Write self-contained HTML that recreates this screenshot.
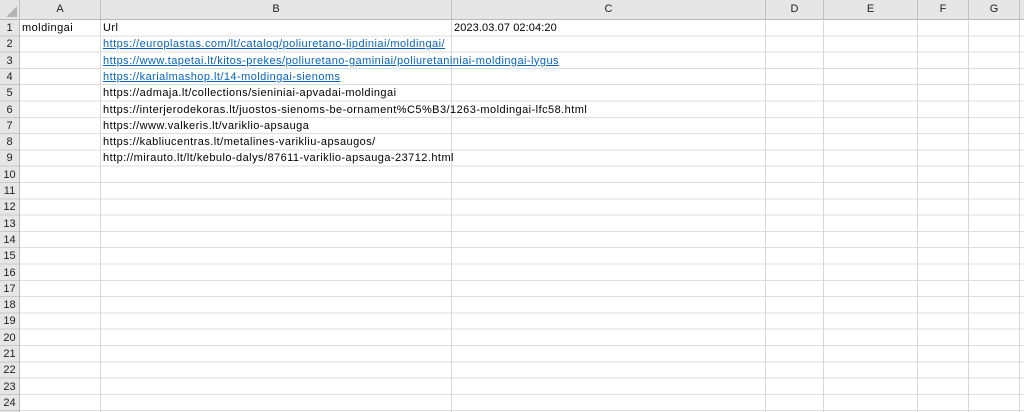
<!DOCTYPE html>
<html><head><meta charset="utf-8"><style>
html,body{margin:0;padding:0;width:1024px;height:412px;overflow:hidden;background:#fff;font-family:"Liberation Sans",Calibri,sans-serif;}
#g{position:absolute;left:20px;top:20px;width:1004px;height:392px;
background-image:repeating-linear-gradient(to bottom,transparent 0,transparent 15.3px,#dedede 15.3px,#dedede 16.3px);}
.v{position:absolute;top:0;width:1px;height:412px;background:#d8d8d8}
.vh{position:absolute;top:0;width:1px;height:20px;background:#c0c0c0}
#hdr{position:absolute;left:0;top:0;width:1024px;height:19px;background:#e6e6e6;border-bottom:1px solid #b8b8b8}
#rh{position:absolute;left:0;top:20px;width:19px;height:392px;background:#e6e6e6;border-right:1px solid #b8b8b8;
background-image:repeating-linear-gradient(to bottom,transparent 0,transparent 15.3px,#c8c8c8 15.3px,#c8c8c8 16.3px);}
.ch{position:absolute;top:3px;font-size:11px;color:#222;text-align:center}
.rn{position:absolute;left:0;width:19px;text-align:center;font-size:11px;color:#222}
.t{position:absolute;font-size:11px;letter-spacing:0.45px;color:#000;white-space:nowrap}
.l{color:#0563c1;text-decoration:underline}
#tri{position:absolute;left:6px;top:6px;width:0;height:0;border-left:11px solid transparent;border-bottom:11px solid #b4b4b4}
</style></head><body>
<div id="g"></div>
<div class="v" style="left:100px"></div>
<div class="v" style="left:451px"></div>
<div class="v" style="left:765px"></div>
<div class="v" style="left:823px"></div>
<div class="v" style="left:917px"></div>
<div class="v" style="left:968px"></div>
<div class="v" style="left:1019px"></div>
<div id="hdr"></div>
<div id="tri"></div>
<div class="vh" style="left:19px"></div>
<div class="vh" style="left:100px"></div>
<div class="vh" style="left:451px"></div>
<div class="vh" style="left:765px"></div>
<div class="vh" style="left:823px"></div>
<div class="vh" style="left:917px"></div>
<div class="vh" style="left:968px"></div>
<div class="vh" style="left:1019px"></div>
<div class="ch" style="left:20px;width:80px">A</div>
<div class="ch" style="left:101px;width:350px">B</div>
<div class="ch" style="left:452px;width:313px">C</div>
<div class="ch" style="left:766px;width:57px">D</div>
<div class="ch" style="left:824px;width:93px">E</div>
<div class="ch" style="left:918px;width:50px">F</div>
<div class="ch" style="left:969px;width:50px">G</div>
<div id="rh"></div>
<div class="rn" style="top:22px">1</div>
<div class="rn" style="top:38.3px">2</div>
<div class="rn" style="top:54.6px">3</div>
<div class="rn" style="top:70.9px">4</div>
<div class="rn" style="top:87.2px">5</div>
<div class="rn" style="top:103.5px">6</div>
<div class="rn" style="top:119.8px">7</div>
<div class="rn" style="top:136.1px">8</div>
<div class="rn" style="top:152.4px">9</div>
<div class="rn" style="top:168.7px">10</div>
<div class="rn" style="top:185px">11</div>
<div class="rn" style="top:201.3px">12</div>
<div class="rn" style="top:217.6px">13</div>
<div class="rn" style="top:233.9px">14</div>
<div class="rn" style="top:250.2px">15</div>
<div class="rn" style="top:266.5px">16</div>
<div class="rn" style="top:282.8px">17</div>
<div class="rn" style="top:299.1px">18</div>
<div class="rn" style="top:315.4px">19</div>
<div class="rn" style="top:331.7px">20</div>
<div class="rn" style="top:348px">21</div>
<div class="rn" style="top:364.3px">22</div>
<div class="rn" style="top:380.6px">23</div>
<div class="rn" style="top:396.9px">24</div>
<div class="t" style="left:22px;top:22px">moldingai</div>
<div class="t" style="left:103px;top:22px">Url</div>
<div class="t" style="left:454px;top:22px;letter-spacing:0.1px">2023.03.07 02:04:20</div>
<div class="t l" style="left:103px;top:38.3px">https://europlastas.com/lt/catalog/poliuretano-lipdiniai/moldingai/</div>
<div class="t l" style="left:103px;top:54.6px">https://www.tapetai.lt/kitos-prekes/poliuretano-gaminiai/poliuretaniniai-moldingai-lygus</div>
<div class="t l" style="left:103px;top:70.9px">https://karialmashop.lt/14-moldingai-sienoms</div>
<div class="t" style="left:103px;top:87.2px">https://admaja.lt/collections/sieniniai-apvadai-moldingai</div>
<div class="t" style="left:103px;top:103.5px">https://interjerodekoras.lt/juostos-sienoms-be-ornament%C5%B3/1263-moldingai-lfc58.html</div>
<div class="t" style="left:103px;top:119.8px">https://www.valkeris.lt/variklio-apsauga</div>
<div class="t" style="left:103px;top:136.1px">https://kabliucentras.lt/metalines-varikliu-apsaugos/</div>
<div class="t" style="left:103px;top:152.4px">http://mirauto.lt/lt/kebulo-dalys/87611-variklio-apsauga-23712.html</div>
</body></html>
